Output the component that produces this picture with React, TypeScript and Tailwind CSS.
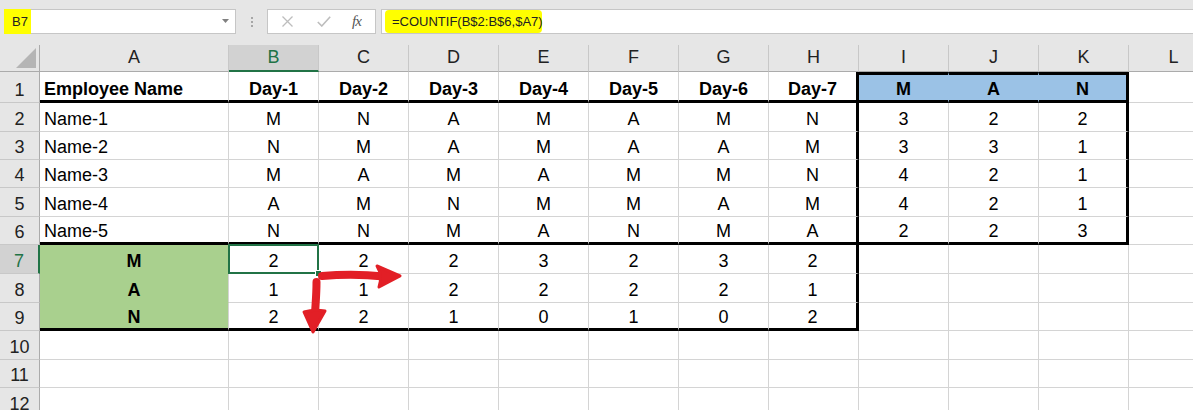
import React from "react";

const COLS = ["A", "B", "C", "D", "E", "F", "G", "H", "I", "J", "K", "L"];

// rows 1..12, columns A..L
const DATA: string[][] = [
  ["Employee Name", "Day-1", "Day-2", "Day-3", "Day-4", "Day-5", "Day-6", "Day-7", "M", "A", "N", ""],
  ["Name-1", "M", "N", "A", "M", "A", "M", "N", "3", "2", "2", ""],
  ["Name-2", "N", "M", "A", "M", "A", "A", "M", "3", "3", "1", ""],
  ["Name-3", "M", "A", "M", "A", "M", "M", "N", "4", "2", "1", ""],
  ["Name-4", "A", "M", "N", "M", "M", "A", "M", "4", "2", "1", ""],
  ["Name-5", "N", "N", "M", "A", "N", "M", "A", "2", "2", "3", ""],
  ["M", "2", "2", "2", "3", "2", "3", "2", "", "", "", ""],
  ["A", "1", "1", "2", "2", "2", "2", "1", "", "", "", ""],
  ["N", "2", "2", "1", "0", "1", "0", "2", "", "", "", ""],
  ["", "", "", "", "", "", "", "", "", "", "", ""],
  ["", "", "", "", "", "", "", "", "", "", "", ""],
  ["", "", "", "", "", "", "", "", "", "", "", ""],
];

function cellClass(r: number, c: number) {
  const blue = r === 1 && c >= 8 && c <= 10;
  const green = c === 0 && r >= 7 && r <= 9;
  const thickRight = (c === 7 && r <= 9) || (c === 10 && r <= 6);
  const thickBottom = ((r === 1 || r === 6) && c <= 10) || (r === 9 && c <= 7);
  const cls = ["relative flex items-end overflow-hidden whitespace-nowrap"];

  cls.push(c === 0 && r <= 6 ? "justify-start pl-[4px]" : "justify-center");
  if (r === 1 || green) cls.push("font-bold");
  cls.push(blue ? "bg-[#9bc2e6]" : green ? "bg-[#a9d08e]" : "bg-white");

  if (thickRight) cls.push("border-r-[3px] border-r-black");
  else if (blue) cls.push("border-r border-r-[#9bc2e6]");
  else cls.push("border-r border-r-[#d4d4d4]");

  if (thickBottom) cls.push("border-b-[3px] border-b-black");
  else if (green) cls.push("border-b border-b-[#a9d08e] pb-[1px]");
  else cls.push("border-b border-b-[#d4d4d4] pb-[1px]");

  if (blue) cls.push("border-t-[3px] border-t-black");
  return cls.join(" ");
}

function Toolbar() {
  return (
    <div className="h-[45px] bg-[#e6e6e6] flex items-start pt-[9px] text-[13px] text-[#222]">
      <div className="ml-[4px] w-[232px] h-[25px] bg-white border border-[#c6c6c6] flex items-stretch relative">
        <div className="bg-[#ffff00] w-[27px] -ml-[1px] -my-[1px] flex items-center pl-[8px]">B7</div>
        <svg className="absolute right-[6px] top-[9px]" width="7" height="4" viewBox="0 0 7 4">
          <path d="M0 0 L7 0 L3.5 4 Z" fill="#808080" />
        </svg>
      </div>
      <div className="ml-[15px] mt-[8px] flex flex-col gap-[2px]">
        <span className="w-[2px] h-[2px] bg-[#a6a6a6]" />
        <span className="w-[2px] h-[2px] bg-[#a6a6a6]" />
        <span className="w-[2px] h-[2px] bg-[#a6a6a6]" />
      </div>
      <div className="ml-[14px] w-[109px] h-[25px] bg-white border border-[#c6c6c6] flex items-center">
        <svg className="ml-[14px]" width="11" height="11" viewBox="0 0 11 11">
          <path d="M0.5 0.5 L10.5 10.5 M10.5 0.5 L0.5 10.5" stroke="#bdbdbd" strokeWidth="1.3" />
        </svg>
        <svg className="ml-[24px]" width="14" height="11" viewBox="0 0 14 11">
          <path d="M0.8 6 L4.8 10 L13.2 0.8" stroke="#bdbdbd" strokeWidth="1.6" fill="none" />
        </svg>
        <span className="ml-[21px] font-['Liberation_Serif',serif] italic text-[15px] text-[#555] leading-none tracking-[-1px]">
          fx
        </span>
      </div>
      <div className="ml-[5px] flex-1 h-[25px] bg-white border border-[#c6c6c6] border-r-0 flex items-stretch">
        <div className="ml-[3px] w-[157px] bg-[#ffff00] rounded-[4px] flex items-center pl-[7px] whitespace-nowrap">
          =COUNTIF(B$2:B$6,$A7)
        </div>
      </div>
    </div>
  );
}

function Sheet() {
  return (
    <div className="grid grid-cols-[40px_189px_repeat(11,90px)] grid-rows-[27px_31px_29px_28px_28px_29px_28px_29px_29px_28px_29px_28px_29px] text-[18px] leading-[21px] text-black">
      <div className="bg-[#e6e6e6] border-r border-b border-[#ababab] flex items-end justify-end pr-[3px] pb-[3px]">
        <svg width="20" height="20" viewBox="0 0 20 20">
          <path d="M20 0 L20 20 L0 20 Z" fill="#b5b5b5" />
        </svg>
      </div>
      {COLS.map((col, c) =>
        c === 1 ? (
          <div
            key={col}
            className="bg-[#d2d2d2] text-[#217346] border-r border-r-[#c8c8c8] border-b-2 border-b-[#217346] flex items-end justify-center pb-[2px]"
          >
            {col}
          </div>
        ) : (
          <div
            key={col}
            className="bg-[#e6e6e6] text-[#222] border-r border-r-[#c8c8c8] border-b border-b-[#ababab] flex items-end justify-center pb-[3px]"
          >
            {col}
          </div>
        )
      )}
      {DATA.map((row, i) => {
        const r = i + 1;
        return (
          <React.Fragment key={r}>
            {r === 7 ? (
              <div className="bg-[#d2d2d2] text-[#217346] border-b border-b-[#c8c8c8] border-r-2 border-r-[#217346] flex items-end justify-center pb-[1px]">
                {r}
              </div>
            ) : (
              <div className="bg-[#e6e6e6] text-[#222] border-b border-b-[#c8c8c8] border-r border-r-[#ababab] flex items-end justify-center pb-[1px]">
                {r}
              </div>
            )}
            {row.map((v, c) =>
              r === 7 && c === 1 ? (
                <div key={c} className={cellClass(r, c) + " overflow-visible"}>
                  {v}
                  <span className="absolute -left-[1px] -top-[1px] -right-[1px] -bottom-[1px] border-2 border-[#217346]" />
                  <span className="absolute -right-[4px] -bottom-[4px] w-[7px] h-[7px] bg-[#217346] border border-white z-10" />
                </div>
              ) : (
                <div key={c} className={cellClass(r, c)}>
                  {v}
                </div>
              )
            )}
          </React.Fragment>
        );
      })}
    </div>
  );
}

export default function App() {
  return (
    <div className="relative w-[1193px] h-[410px] overflow-hidden bg-white font-['Liberation_Sans',Arial,sans-serif]">
      <Toolbar />
      <Sheet />
      {/* hand-drawn arrows */}
      <svg className="absolute left-0 top-0 pointer-events-none z-20" width="1193" height="410">
        <path d="M322 276 C 340 274.5, 360 274, 384 276.5" stroke="#e21f26" strokeWidth="8" strokeLinecap="round" fill="none" />
        <path d="M377 266 L400 276 L379 287 Q383 276 377 266 Z" fill="#e21f26" stroke="#e21f26" strokeWidth="3" strokeLinejoin="round" />
        <path d="M316.5 282 C 316.5 295, 315.5 304, 315 314" stroke="#e21f26" strokeWidth="8" strokeLinecap="round" fill="none" />
        <path d="M304 312 Q314 309 325 311 L313 332 Z" fill="#e21f26" stroke="#e21f26" strokeWidth="3" strokeLinejoin="round" />
      </svg>
    </div>
  );
}
